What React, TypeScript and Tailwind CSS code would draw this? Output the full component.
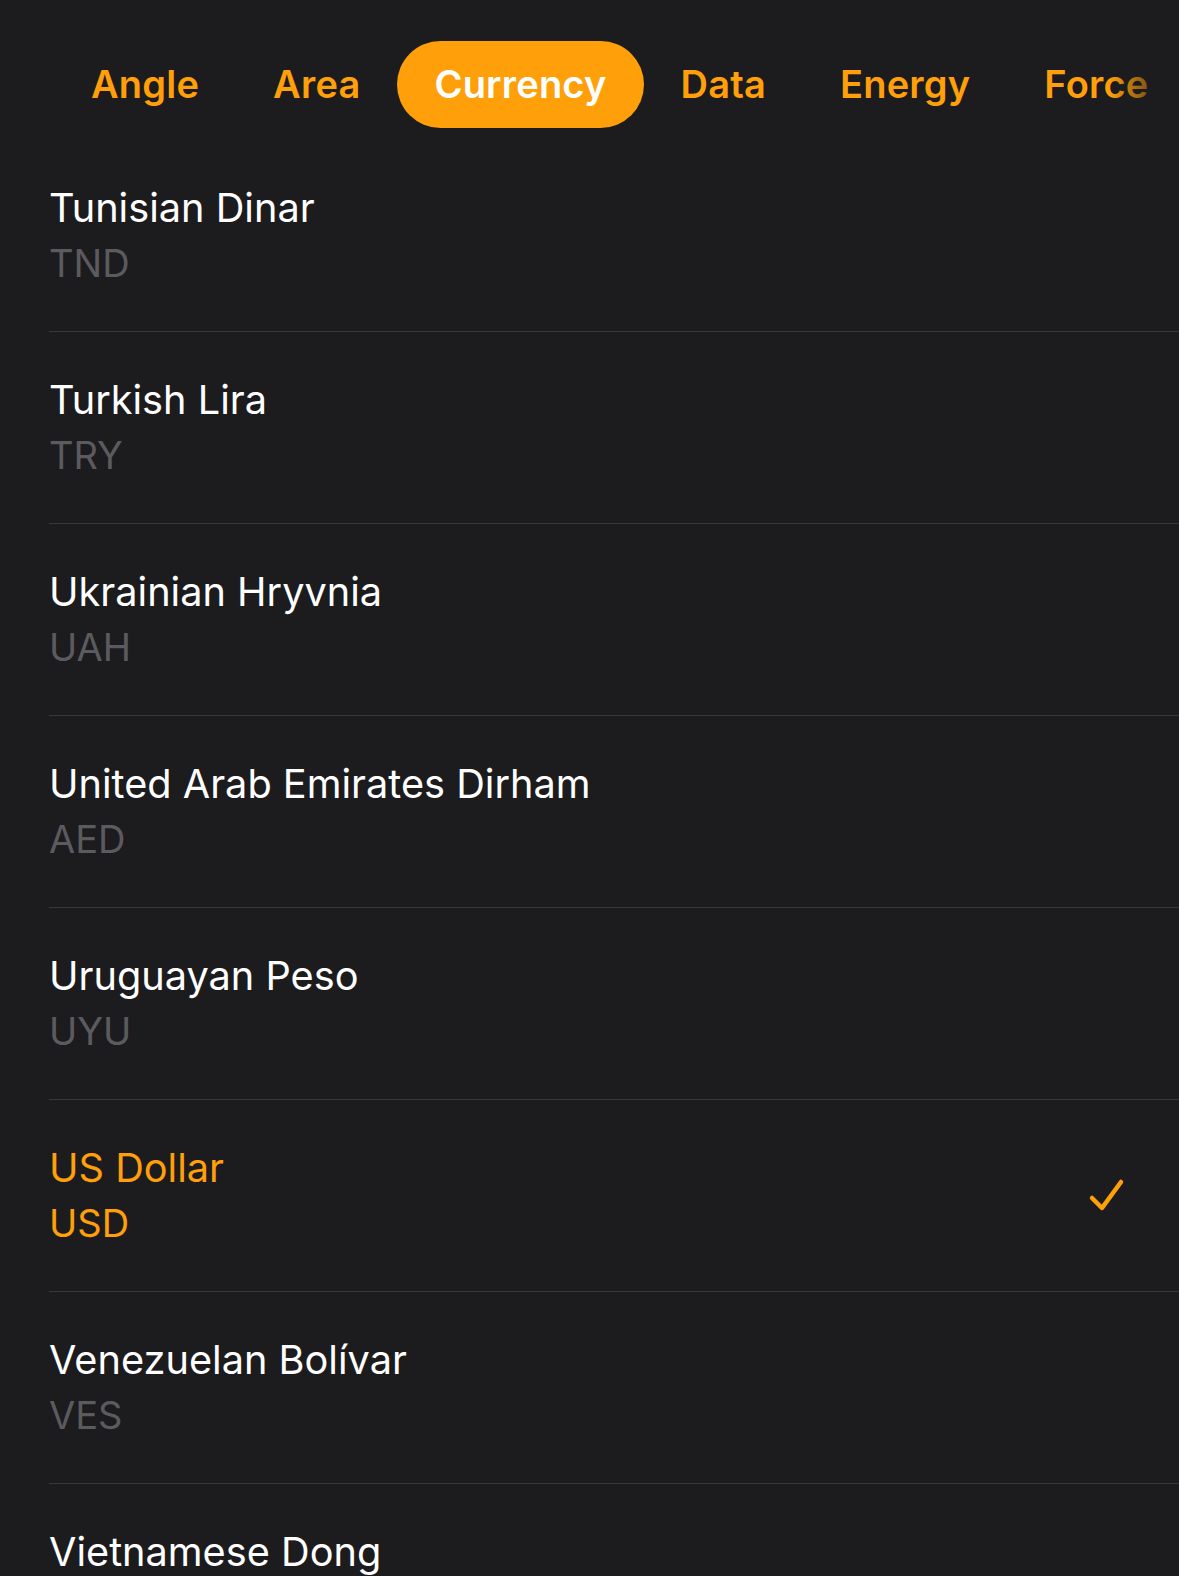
const tabs = ["Angle", "Area", "Currency", "Data", "Energy", "Force", "Fuel"];

const currencies = [
  { name: "Tunisian Dinar", code: "TND" },
  { name: "Turkish Lira", code: "TRY" },
  { name: "Ukrainian Hryvnia", code: "UAH" },
  { name: "United Arab Emirates Dirham", code: "AED" },
  { name: "Uruguayan Peso", code: "UYU" },
  { name: "US Dollar", code: "USD", selected: true },
  { name: "Venezuelan Bolívar", code: "VES" },
  { name: "Vietnamese Dong", code: "VND" },
];

function Check() {
  return (
    <svg width="44" height="44" viewBox="0 0 44 44" fill="none">
      <path
        d="M7 24 L17 34 L36 8"
        stroke="#ff9f0a"
        strokeWidth="4.5"
        strokeLinecap="round"
        strokeLinejoin="round"
      />
    </svg>
  );
}

export default function App() {
  return (
    <div
      className="h-[1576px] w-[1179px] overflow-hidden bg-[#1c1c1e]"
      style={{ fontFamily: "Inter, 'Noto Sans', sans-serif" }}
    >
      <div className="relative h-[139px] pt-[41px]">
        <div className="flex pl-[54px] whitespace-nowrap">
          {tabs.map((t) =>
            t === "Currency" ? (
              <div
                key={t}
                className="flex h-[87px] items-center rounded-full bg-[#ff9f0a] px-[37px] text-[38px] font-semibold tracking-[0.2px] text-white"
              >
                {t}
              </div>
            ) : (
              <div
                key={t}
                className="flex h-[87px] items-center px-[37px] text-[38px] font-semibold tracking-[0.2px] text-[#ff9f0a]"
              >
                {t}
              </div>
            )
          )}
        </div>
        <div className="pointer-events-none absolute right-0 top-0 h-full w-[70px] bg-gradient-to-r from-transparent to-[#1c1c1e]" />
      </div>

      <div className="pl-[49px]">
        {currencies.map((c, i) => (
          <div
            key={c.code}
            className={
              i === 0
                ? "flex h-[192px] items-center pr-[50px]"
                : "flex h-[192px] items-center border-t border-[#38383a] pr-[50px]"
            }
          >
            <div className="flex-1 pt-[1px]">
              <div
                className={
                  c.selected
                    ? "text-[39.7px] leading-[55px] text-[#ff9f0a]"
                    : "text-[39.7px] leading-[55px] text-white"
                }
              >
                {c.name}
              </div>
              <div
                className={
                  c.selected
                    ? "text-[38px] leading-[55px] text-[#ff9f0a]"
                    : "text-[38px] leading-[55px] text-[#5b5b5f]"
                }
              >
                {c.code}
              </div>
            </div>
            {c.selected && <Check />}
          </div>
        ))}
      </div>
    </div>
  );
}
